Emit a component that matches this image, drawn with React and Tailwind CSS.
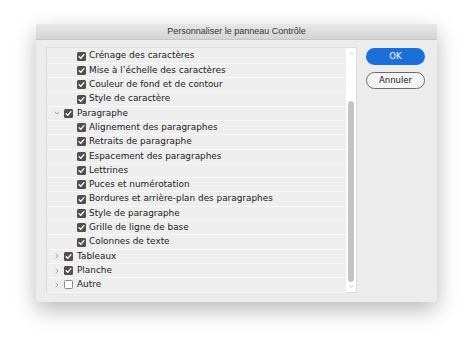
import { ChevronDown, ChevronRight, ChevronUp } from 'lucide-react';

const rows = [
  { label: 'Crénage des caractères', level: 1, checked: true },
  { label: 'Mise à l’échelle des caractères', level: 1, checked: true },
  { label: 'Couleur de fond et de contour', level: 1, checked: true },
  { label: 'Style de caractère', level: 1, checked: true },
  { label: 'Paragraphe', level: 0, checked: true, open: true },
  { label: 'Alignement des paragraphes', level: 1, checked: true },
  { label: 'Retraits de paragraphe', level: 1, checked: true },
  { label: 'Espacement des paragraphes', level: 1, checked: true },
  { label: 'Lettrines', level: 1, checked: true },
  { label: 'Puces et numérotation', level: 1, checked: true },
  { label: 'Bordures et arrière-plan des paragraphes', level: 1, checked: true },
  { label: 'Style de paragraphe', level: 1, checked: true },
  { label: 'Grille de ligne de base', level: 1, checked: true },
  { label: 'Colonnes de texte', level: 1, checked: true },
  { label: 'Tableaux', level: 0, checked: true },
  { label: 'Planche', level: 0, checked: true },
  { label: 'Autre', level: 0, checked: false },
];

function Checkbox({ checked }) {
  if (!checked) {
    return <span className="block w-[9px] h-[9px] rounded-[1.5px] border border-[#8a8a8a] bg-white shrink-0" />;
  }
  return (
    <span className="w-[9px] h-[9px] rounded-[1.5px] bg-[#505050] flex items-center justify-center shrink-0">
      <svg width="7" height="7" viewBox="0 0 8 8">
        <path d="M1.3 4.2 L3.2 6 L6.7 1.8" fill="none" stroke="#fff" strokeWidth="1.5" strokeLinecap="round" strokeLinejoin="round" />
      </svg>
    </span>
  );
}

function Row({ row }) {
  return (
    <div className="h-[14.3px] flex items-center border-b border-[#f8f8f8] text-[8.9px] text-[#222]">
      {row.level === 0 ? (
        <div className="flex items-center pl-[4px]">
          <span className="w-[12px] flex justify-center text-[#777]">
            {row.open ? <ChevronDown size={8} strokeWidth={2} /> : <ChevronRight size={8} strokeWidth={2} />}
          </span>
          <span className="ml-[1px]"><Checkbox checked={row.checked} /></span>
          <span className="ml-[4px]">{row.label}</span>
        </div>
      ) : (
        <div className="flex items-center pl-[30px]">
          <Checkbox checked={row.checked} />
          <span className="ml-[3px]">{row.label}</span>
        </div>
      )}
    </div>
  );
}

export default function App() {
  return (
    <div className="w-[474px] h-[350px] bg-white pt-[24px] pl-[36px]" style={{ fontFamily: '"DejaVu Sans", sans-serif' }}>
      <div className="w-[401px] h-[278px] bg-[#ececec] rounded-[3px] shadow-[0_8px_22px_rgba(0,0,0,0.28)] flex flex-col overflow-hidden">
        <div className="h-[16px] bg-gradient-to-b from-[#e8e8e8] to-[#d4d4d4] border-b border-[#c4c4c4] flex items-center justify-center text-[9px] text-[#333]" style={{ fontFamily: '"Liberation Sans", sans-serif' }}>
          Personnaliser le panneau Contrôle
        </div>
        <div className="flex flex-1 pt-[7px] pl-[10px]">
          <div className="w-[311px] h-[246px] border border-[#dcdcdc] bg-[#eeeeee] flex">
            <div className="flex-1 pt-[1.5px]">
              {rows.map((r) => (
                <Row key={r.label} row={r} />
              ))}
            </div>
            <div className="w-[10px] bg-white flex flex-col items-center py-[2px]">
              <ChevronUp size={7} strokeWidth={2} className="text-[#999]" />
              <div className="flex-1 w-full flex flex-col px-[2px] pt-[44px] pb-[1px]">
                <div className="flex-1 rounded-full bg-[#c4c4c4]" />
              </div>
              <ChevronDown size={7} strokeWidth={2} className="text-[#999]" />
            </div>
          </div>
          <div className="flex flex-col ml-[9px] gap-[7px] pt-[1px]">
            <button className="w-[59px] h-[17px] rounded-full bg-[#1b6fd9] text-white text-[8.5px] flex items-center justify-center">
              OK
            </button>
            <button className="w-[59px] h-[17px] rounded-full bg-[#f4f4f4] border border-[#6a6a6a] text-[#222] text-[8.5px] flex items-center justify-center">
              Annuler
            </button>
          </div>
        </div>
      </div>
    </div>
  );
}
